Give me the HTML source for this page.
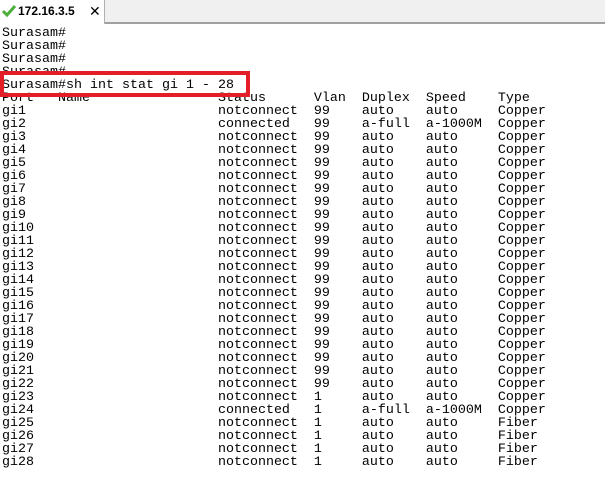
<!DOCTYPE html>
<html><head><meta charset="utf-8"><style>
html,body{margin:0;padding:0;width:605px;height:479px;overflow:hidden;background:#fff;}
.bar{position:absolute;left:0;top:0;width:605px;height:22px;background:#f0f0f0;border-bottom:2px solid #a0a0a0;}
.tab{position:absolute;left:0;top:0;width:104px;height:24px;background:#fff;border-right:1px solid #b0b0b0;font:bold 12px "Liberation Sans",sans-serif;color:#000;}
.tab .t{position:absolute;left:18px;top:4px;}
.tab .x{position:absolute;left:89px;top:3px;font-weight:normal;font-size:14px;}
.tab svg{position:absolute;left:2px;top:5px;}
pre{position:absolute;left:2px;top:27px;margin:0;font:13.33px/13px "Liberation Mono",monospace;color:#000;letter-spacing:0;}
.box{position:absolute;left:0;top:71px;width:242px;height:18px;border:4px solid #e41e26;}
</style></head><body>
<div class="bar"></div>
<div class="tab"><svg width="14" height="12" viewBox="0 0 14 12"><path d="M1 6 L5 10 L13 1" stroke="#4caf3a" stroke-width="3" fill="none"/></svg><span class="t">172.16.3.5</span><span class="x">✕</span></div>
<pre>Surasam#
Surasam#
Surasam#
Surasam#
Surasam#sh int stat gi 1 - 28
Port   Name                Status      Vlan  Duplex  Speed    Type
gi1                        notconnect  99    auto    auto     Copper
gi2                        connected   99    a-full  a-1000M  Copper
gi3                        notconnect  99    auto    auto     Copper
gi4                        notconnect  99    auto    auto     Copper
gi5                        notconnect  99    auto    auto     Copper
gi6                        notconnect  99    auto    auto     Copper
gi7                        notconnect  99    auto    auto     Copper
gi8                        notconnect  99    auto    auto     Copper
gi9                        notconnect  99    auto    auto     Copper
gi10                       notconnect  99    auto    auto     Copper
gi11                       notconnect  99    auto    auto     Copper
gi12                       notconnect  99    auto    auto     Copper
gi13                       notconnect  99    auto    auto     Copper
gi14                       notconnect  99    auto    auto     Copper
gi15                       notconnect  99    auto    auto     Copper
gi16                       notconnect  99    auto    auto     Copper
gi17                       notconnect  99    auto    auto     Copper
gi18                       notconnect  99    auto    auto     Copper
gi19                       notconnect  99    auto    auto     Copper
gi20                       notconnect  99    auto    auto     Copper
gi21                       notconnect  99    auto    auto     Copper
gi22                       notconnect  99    auto    auto     Copper
gi23                       notconnect  1     auto    auto     Copper
gi24                       connected   1     a-full  a-1000M  Copper
gi25                       notconnect  1     auto    auto     Fiber
gi26                       notconnect  1     auto    auto     Fiber
gi27                       notconnect  1     auto    auto     Fiber
gi28                       notconnect  1     auto    auto     Fiber</pre>
<div class="box"></div>
</body></html>
